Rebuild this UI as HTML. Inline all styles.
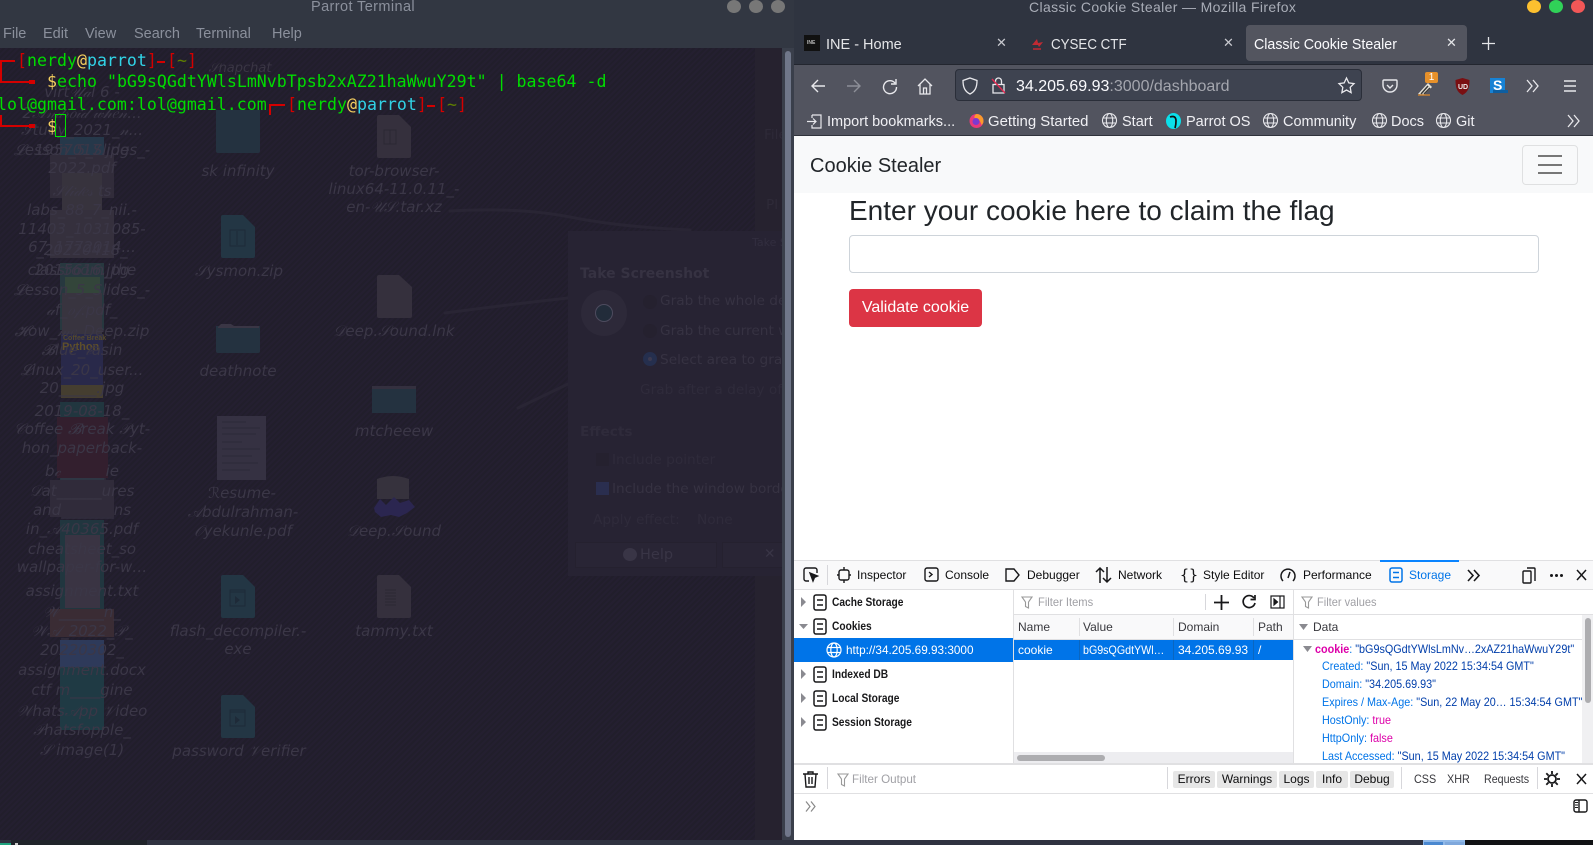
<!DOCTYPE html>
<html><head><meta charset="utf-8"><title>Parrot desktop</title>
<style>
html,body{margin:0;padding:0;width:1593px;height:845px;overflow:hidden;background:#231f2e}
*{box-sizing:border-box}
.a{position:absolute}
.t{position:absolute;white-space:nowrap;line-height:20px;height:20px;font-family:"Liberation Sans",sans-serif;transform-origin:left center}
.d{position:absolute;white-space:nowrap;line-height:20px;height:20px;font-family:"DejaVu Sans",sans-serif;font-style:italic;font-size:15px;color:#3b3747;transform:translateX(-50%)}
.g{position:absolute;white-space:nowrap;line-height:20px;height:20px;font-family:"DejaVu Sans",sans-serif;font-size:13.7px;color:#363242}
.m{position:absolute;white-space:pre;line-height:22px;height:22px;font-family:"DejaVu Sans Mono",monospace;font-size:16.6px;color:#00dc00}
.r{position:absolute;background:#d40000}
.mt{font-size:14.5px;color:#8b909c;top:24px}
.tb{font-size:14.5px;color:#fbfbfe;top:35px}
.bm{font-size:14.5px;color:#f0f0f4;top:112px}
.dt{font-size:12px;color:#0c0c0d;top:565px}
.side{font-size:12px;font-weight:bold;color:#18181a;transform:scaleX(.85)}
.h{font-size:12px;color:#38383d;top:617px}
.c{font-size:12px;color:#fff;top:640px}
.k{font-size:12px;color:#0074e8;transform:scaleX(.9)}
.k b{font-weight:normal;color:#003eaa}
.k i{font-style:normal;color:#dd00a9}
.btn{position:absolute;top:771px;height:17px;background:#e6e6e6;border-radius:2px;font:12px/17px "Liberation Sans",sans-serif;color:#0c0c0d;text-align:center}
svg{position:absolute;overflow:visible}
</style></head><body>

<!-- desktop background -->
<div class="a" style="left:0;top:48px;width:782px;height:792px;background:repeating-linear-gradient(135deg,#241f30 0,#241f30 2px,#211e2b 2px,#211e2b 4px)"></div>
<div class="a" style="left:755px;top:48px;width:27px;height:792px;background:#26222f"></div>

<!-- column 1 thumbs -->
<div class="a" style="left:60px;top:137px;width:44px;height:26px;background:#26384a"></div>
<div class="a" style="left:50px;top:155px;width:64px;height:43px;background:#312c3a"></div>
<div class="a" style="left:62px;top:173px;width:40px;height:65px;background:#37333d"></div>
<div class="a" style="left:50px;top:210px;width:64px;height:48px;background:#35303d"></div>
<div class="a" style="left:60px;top:263px;width:44px;height:67px;background:#27383f"></div>
<div class="a" style="left:65px;top:277px;width:35px;height:17px;background:#33453a"></div>
<div class="a" style="left:62px;top:293px;width:40px;height:41px;background:#38343f"></div>
<div class="a" style="left:61px;top:334px;width:42px;height:64px;background:#29294a"></div>
<div class="a" style="left:61px;top:385px;width:42px;height:13px;background:#453e30"></div>
<div class="a" style="left:60px;top:402px;width:44px;height:80px;background:#21363f"></div>
<div class="a" style="left:57px;top:417px;width:51px;height:61px;background:#331f2e"></div>
<div class="a" style="left:50px;top:480px;width:64px;height:37px;background:#302b3a"></div>
<div class="a" style="left:60px;top:520px;width:44px;height:93px;background:#21363f"></div>
<div class="a" style="left:65px;top:535px;width:35px;height:73px;background:#3a3443"></div>
<div class="a" style="left:50px;top:609px;width:64px;height:28px;background:#3a2c34"></div>
<div class="a" style="left:60px;top:640px;width:44px;height:27px;background:#2e3a5a"></div>
<div class="a" style="left:60px;top:667px;width:44px;height:63px;background:#1f3a44"></div>
<div class="t" style="left:63px;top:329px;font-size:7px;font-weight:bold;color:#554a2c">Coffee Break</div>
<div class="t" style="left:62px;top:337px;font-size:11px;font-weight:bold;color:#5f4f2a">Python</div>

<!-- column 1 overlapped text -->
<div class="d" style="left:82px;top:82px">virt𝒰𝒶l 6 -</div>
<div class="d" style="left:82px;top:103px">2𝒜𝓃𝒹𝓇𝑜𝒾𝒹 𝓌𝒽𝑒𝓃...</div>
<div class="d" style="left:82px;top:120px">𝒮tudy_2021_𝓃...</div>
<div class="d" style="left:82px;top:140px">𝓛esson_5_Slides_-</div>
<div class="d" style="left:82px;top:140px">1957017.jpg</div>
<div class="d" style="left:82px;top:158px">2022.pdf</div>
<div class="d" style="left:82px;top:181px">𝒮𝓁𝒾𝒹𝑒𝓈 ts</div>
<div class="d" style="left:82px;top:200px">labs_88_7_nii.-</div>
<div class="d" style="left:82px;top:219px">11403_1031085-</div>
<div class="d" style="left:82px;top:237px">67_1772014...</div>
<div class="d" style="left:82px;top:240px">_20220418_</div>
<div class="d" style="left:82px;top:260px">classroom_the</div>
<div class="d" style="left:82px;top:260px">2015616.jpg</div>
<div class="d" style="left:82px;top:280px">𝓛esson_5_Slides_-</div>
<div class="d" style="left:82px;top:300px">𝒶f_𝑜𝒻.pdf_</div>
<div class="d" style="left:82px;top:321px">𝓗ow_𝓂𝑒_Deep.zip</div>
<div class="d" style="left:82px;top:340px">𝓑lue_𝒷asin</div>
<div class="d" style="left:82px;top:360px">𝓛inux_20_user...</div>
<div class="d" style="left:82px;top:378px">20_____.jpg</div>
<div class="d" style="left:82px;top:401px">2019-08-18_</div>
<div class="d" style="left:82px;top:419px">𝒞offee 𝓑reak 𝒫yt-</div>
<div class="d" style="left:82px;top:438px">hon_paperback-</div>
<div class="d" style="left:82px;top:461px">b𝒸______ie</div>
<div class="d" style="left:82px;top:481px">𝒟at______ures</div>
<div class="d" style="left:82px;top:500px">and_______ns</div>
<div class="d" style="left:82px;top:519px">in_𝒜40365.pdf</div>
<div class="d" style="left:82px;top:539px">cheatsheet_so</div>
<div class="d" style="left:82px;top:557px">wallpaper-for-w…</div>
<div class="d" style="left:82px;top:581px">assignment.txt</div>
<div class="d" style="left:82px;top:602px">𝒲______n_</div>
<div class="d" style="left:82px;top:621px">𝒲𝒜_2022_𝒫_</div>
<div class="d" style="left:82px;top:640px">20220302_</div>
<div class="d" style="left:82px;top:660px">assignment.docx</div>
<div class="d" style="left:82px;top:680px">ctf m____gine</div>
<div class="d" style="left:82px;top:701px">𝒲hats𝒜pp 𝒱ideo</div>
<div class="d" style="left:82px;top:720px">𝒫hatsfopple_</div>
<div class="d" style="left:82px;top:740px">𝒮 image(1)</div>

<!-- column 2 -->
<svg style="left:0;top:0" width="1" height="1">
<g fill="#243240">
<path d="M216 110h44v41a2 2 0 0 1-2 2h-40a2 2 0 0 1-2-2z"/>
<path d="M216 326h44v25a2 2 0 0 1-2 2h-40a2 2 0 0 1-2-2z"/>
<path d="M372 389h44v24h-44z"/>
</g>
<path d="M218 327l3-3h10l3 2h25v2h-41z" fill="#3a3645"/>
<g fill="#233644">
<path d="M223 215h20l12 12v29a2 2 0 0 1-2 2h-30a2 2 0 0 1-2-2v-39a2 2 0 0 1 2-2z"/>
<path d="M223 575h20l12 12v29a2 2 0 0 1-2 2h-30a2 2 0 0 1-2-2v-39a2 2 0 0 1 2-2z"/>
<path d="M223 695h20l12 12v29a2 2 0 0 1-2 2h-30a2 2 0 0 1-2-2v-39a2 2 0 0 1 2-2z"/>
</g>
<g fill="none" stroke="#1e2a38"><path d="M230 230h15v16h-15zM237 231v14"/><path d="M230 590h15v16h-15zM230 592h15"/><path d="M230 710h15v16h-15zM230 712h15"/></g>
<path d="M235 596l5 4-5 4zM235 716l5 4-5 4z" fill="#1e2a38"/>
<rect x="217" y="416" width="49" height="64" fill="#353142"/>
<g stroke="#2c2938" stroke-width="1"><path d="M222 422h24M222 428h38M222 434h34M222 442h20M222 449h38M222 456h30M222 463h36M222 470h28"/></g>
<g fill="#35303d">
<path d="M379 115h20l12 12v29a2 2 0 0 1-2 2h-30a2 2 0 0 1-2-2v-39a2 2 0 0 1 2-2z"/>
<path d="M379 275h20l13 12v29a2 2 0 0 1-2 2h-31a2 2 0 0 1-2-2v-39a2 2 0 0 1 2-2z"/>
<path d="M379 575h20l12 12v29a2 2 0 0 1-2 2h-30a2 2 0 0 1-2-2v-39a2 2 0 0 1 2-2z"/>
</g>
<path d="M384 130h12v14h-12zM390 130v14" fill="none" stroke="#2a2733"/>
<g stroke="#2a2733"><path d="M385 590h11M385 593h11M385 596h11M385 599h11M385 602h11M385 605h11"/></g>
<path d="M377 479q16-6 32 0v20h-32z" fill="#36323d"/>
<path d="M374 508l6-9 6 6 8-8 6 6 9-3 6 7-8 6-8 4-8-2-10 2-6-5z" fill="#2b2650"/>
<path d="M372 386h44v3h-44z" fill="#34303f"/>
<g fill="none" stroke="#292534" stroke-width="3" stroke-linecap="round">
<path d="M450 211q70-4 120 6t120 13"/>
<path d="M445 313q60-8 123-15"/>
<path d="M518 408q25-12 50-24"/>
</g>
</svg>
<div class="d" style="left:238px;top:161px">sk infinity</div>
<div class="d" style="left:239px;top:261px">𝒮ysmon.zip</div>
<div class="d" style="left:238px;top:361px">deathnote</div>
<div class="d" style="left:242px;top:483px">ℛesume-</div>
<div class="d" style="left:243px;top:502px">𝒜bdulrahman-</div>
<div class="d" style="left:243px;top:521px">𝒪yekunle.pdf</div>
<div class="d" style="left:238px;top:621px">flash_decompiler.-</div>
<div class="d" style="left:238px;top:639px">exe</div>
<div class="d" style="left:239px;top:741px">password 𝒱erifier</div>
<!-- column 3 -->
<div class="d" style="left:394px;top:161px">tor-browser-</div>
<div class="d" style="left:394px;top:179px">linux64-11.0.11_-</div>
<div class="d" style="left:394px;top:197px">en-𝒰𝒮.tar.xz</div>
<div class="d" style="left:394px;top:321px">𝒟eep.𝒮ound.lnk</div>
<div class="d" style="left:394px;top:421px">mtcheeew</div>
<div class="d" style="left:394px;top:521px">𝒟eep.𝒮ound</div>
<div class="d" style="left:394px;top:621px">tammy.txt</div>
<div class="d" style="left:240px;top:59px;font-size:13px;color:#3a3644">𝒮napchat</div>

<!-- ghost window -->
<div class="g" style="left:755px;top:125px;width:27px;overflow:hidden;padding-left:9px;color:#2e2a38">File</div>
<div class="g" style="left:755px;top:195px;width:27px;overflow:hidden;padding-left:11px;color:#2e2a38">Pl</div>
<div class="a" style="left:568px;top:231px;width:214px;height:345px;background:#272333;overflow:hidden">
<div class="g" style="left:184px;top:2px;font-size:11px;color:#322e3f">Take S</div>
<div class="g" style="left:12px;top:33px;font-weight:bold;font-size:14px;color:#363242">Take Screenshot</div>
<div class="a" style="left:13px;top:59px;width:46px;height:46px;border-radius:50%;background:#2d2939"></div>
<div class="a" style="left:27px;top:73px;width:18px;height:18px;border-radius:50%;border:1px solid #4d4b5e;background:#222c3a"></div>
<div class="a" style="left:75px;top:64px;width:14px;height:14px;border-radius:50%;background:#25212f"></div>
<div class="a" style="left:75px;top:93px;width:14px;height:14px;border-radius:50%;background:#25212f"></div>
<div class="a" style="left:75px;top:121px;width:14px;height:14px;border-radius:50%;background:#252f4e"></div>
<div class="a" style="left:80px;top:126px;width:4px;height:4px;border-radius:50%;background:#3c3a50"></div>
<div class="g" style="left:92px;top:60px">Grab the whole desktop</div>
<div class="g" style="left:92px;top:90px">Grab the current window</div>
<div class="g" style="left:92px;top:119px">Select area to grab</div>
<div class="g" style="left:72px;top:149px;color:#2f2b3b">Grab after a delay of</div>
<div class="g" style="left:12px;top:191px;font-weight:bold;color:#2f2b3b">Effects</div>
<div class="a" style="left:28px;top:222px;width:13px;height:13px;background:#25212f"></div>
<div class="a" style="left:28px;top:251px;width:13px;height:13px;background:#2a2e4f"></div>
<div class="g" style="left:44px;top:219px;color:#2f2b3b">Include pointer</div>
<div class="g" style="left:44px;top:248px">Include the window border</div>
<div class="g" style="left:25px;top:279px;color:#2f2b3b">Apply effect:</div>
<div class="g" style="left:129px;top:279px;color:#2f2b3b">None</div>
<div class="a" style="left:7px;top:311px;width:142px;height:26px;background:#292535;border:1px solid #25212f"></div>
<div class="a" style="left:154px;top:311px;width:60px;height:26px;background:#292535;border:1px solid #25212f;border-right:0"></div>
<div class="a" style="left:55px;top:317px;width:14px;height:13px;border-radius:50%;background:#393546"></div>
<div class="g" style="left:72px;top:314px;font-size:14.5px;color:#393546">Help</div>
<div class="g" style="left:196px;top:313px;color:#393546">✕</div>
</div>

<!-- terminal top -->
<div class="a" style="left:0;top:0;width:794px;height:48px;background:#323742"></div>
<div class="t" style="left:311px;top:-3px;font-size:14.5px;color:#8b909c;letter-spacing:.4px">Parrot Terminal</div>
<div class="a" style="left:727px;top:0;width:14px;height:13px;border-radius:50%;background:#777"></div>
<div class="a" style="left:749px;top:0;width:14px;height:13px;border-radius:50%;background:#777"></div>
<div class="a" style="left:771px;top:0;width:14px;height:13px;border-radius:50%;background:#777"></div>
<div class="t mt" style="left:3px">File</div>
<div class="t mt" style="left:43px">Edit</div>
<div class="t mt" style="left:85px">View</div>
<div class="t mt" style="left:134px">Search</div>
<div class="t mt" style="left:196px">Terminal</div>
<div class="t mt" style="left:272px">Help</div>

<!-- terminal text -->
<div class="r" style="left:0;top:60px;width:15px;height:2px"></div>
<div class="r" style="left:0;top:60px;width:2px;height:23px"></div>
<div class="r" style="left:0;top:81px;width:30px;height:2px"></div>
<div class="r" style="left:29px;top:80px;width:6px;height:4px"></div>
<div class="m" style="left:17px;top:50px"><span style="color:#d40000">[</span>nerdy<span style="color:#f5cf5f">@</span><span style="color:#31d3e6">parrot</span><span style="color:#d40000">]</span></div>
<div class="r" style="left:157px;top:61px;width:8px;height:2px"></div>
<div class="m" style="left:167px;top:50px;color:#d40000">[<span style="color:#5f7f00">~</span>]</div>
<div class="m" style="left:47px;top:71px"><span style="color:#f5cf5f">$</span>echo "bG9sQGdtYWlsLmNvbTpsb2xAZ21haWwuY29t" | base64 -d</div>
<div class="m" style="left:-3px;top:94px">lol@gmail.com:lol@gmail.com</div>
<div class="r" style="left:269px;top:104px;width:16px;height:2px"></div>
<div class="r" style="left:269px;top:104px;width:2px;height:11px"></div>
<div class="m" style="left:287px;top:94px"><span style="color:#d40000">[</span>nerdy<span style="color:#f5cf5f">@</span><span style="color:#31d3e6">parrot</span><span style="color:#d40000">]</span></div>
<div class="r" style="left:427px;top:105px;width:8px;height:2px"></div>
<div class="m" style="left:437px;top:94px;color:#d40000">[<span style="color:#5f7f00">~</span>]</div>
<div class="r" style="left:0;top:115px;width:2px;height:12px"></div>
<div class="r" style="left:0;top:125px;width:30px;height:2px"></div>
<div class="r" style="left:29px;top:124px;width:6px;height:4px"></div>
<div class="m" style="left:47px;top:116px;color:#f5cf5f">$</div>
<div class="a" style="left:55px;top:114px;width:11px;height:23px;border:1px solid #00e000"></div>

<!-- terminal scrollbar -->
<div class="a" style="left:782px;top:48px;width:12px;height:792px;background:#3a3f4b"></div>
<div class="a" style="left:785px;top:51px;width:6px;height:786px;border-radius:3px;background:#70778a"></div>

<!-- Firefox chrome -->
<div class="a" style="left:794px;top:0;width:799px;height:64px;background:#2f3440"></div>
<div class="t" style="left:1029px;top:-3px;font-size:14px;color:#a9adb7;letter-spacing:.36px">Classic Cookie Stealer — Mozilla Firefox</div>
<div class="a" style="left:1527px;top:0;width:14px;height:13px;border-radius:50%;background:#fdc02f"></div>
<div class="a" style="left:1549px;top:0;width:14px;height:13px;border-radius:50%;background:#30d158"></div>
<div class="a" style="left:1571px;top:0;width:14px;height:13px;border-radius:50%;background:#f25757"></div>

<!-- tabs -->
<div class="a" style="left:804px;top:35px;width:16px;height:16px;background:#111"></div>
<div class="t" style="left:807px;top:33px;font-size:5px;font-weight:bold;color:#bbb">INE</div>
<div class="t tb" style="left:826px;color:#e4e5e8">INE - Home</div>
<div class="t" style="left:996px;top:33px;font-size:13px;color:#c8c9cf">✕</div>
<svg style="left:1031px;top:36px" width="14" height="16"><path d="M1 9l5-6 1 4 5-1-4 5-1-2z" fill="#c22a33"/><path d="M2 13h8" stroke="#c22a33" stroke-width="1.5"/></svg>
<div class="t tb" style="left:1051px;color:#e4e5e8;transform:scaleX(.92)">CYSEC CTF</div>
<div class="t" style="left:1223px;top:33px;font-size:13px;color:#c8c9cf">✕</div>
<div class="a" style="left:1246px;top:25px;width:221px;height:36px;background:#53555f;border-radius:4px"></div>
<div class="t tb" style="left:1254px;transform:scaleX(.98)">Classic Cookie Stealer</div>
<div class="t" style="left:1446px;top:33px;font-size:13px;color:#e4e5e8">✕</div>
<svg style="left:1482px;top:37px" width="13" height="13"><path d="M6.5 0v13M0 6.5h13" stroke="#e4e5e8" stroke-width="1.3"/></svg>

<!-- nav -->
<div class="a" style="left:794px;top:64px;width:799px;height:72px;background:#52545f;border-top:1px solid #23262f;border-bottom:1px solid #2f323b"></div>
<svg style="left:810px;top:78px" width="16" height="16" fill="none" stroke="#e8e8ec" stroke-width="1.4"><path d="M15 8H2M8 2L2 8l6 6"/></svg>
<svg style="left:846px;top:78px" width="16" height="16" fill="none" stroke="#8d8f98" stroke-width="1.4"><path d="M1 8h13M8 2l6 6-6 6"/></svg>
<svg style="left:882px;top:78px" width="16" height="16" fill="none" stroke="#e8e8ec" stroke-width="1.4"><path d="M13 5A6.500 6.500 0 1 0 14.500 9M14 1v5H9"/></svg>
<svg style="left:917px;top:78px" width="16" height="17" fill="none" stroke="#e8e8ec" stroke-width="1.3"><path d="M1 8l7-7 7 7M3 6v10h10V6M6.500 16v-6h3v6"/></svg>
<div class="a" style="left:955px;top:69px;width:407px;height:32px;background:#3e4350;border:1px solid #2a2e39;border-radius:4px"></div>
<svg style="left:962px;top:77px" width="16" height="18" fill="none" stroke="#e8e8ec" stroke-width="1.3"><path d="M8 1l7 2.500c0 7-2 11-7 13.500C3 14.500 1 10.500 1 3.500z"/></svg>
<svg style="left:991px;top:77px" width="15" height="17" fill="none"><path d="M2 7.500h11V16H2zM4.500 7.500V4a3 3 0 0 1 6 0v3.500" stroke="#e8e8ec" stroke-width="1.3"/><path d="M1 2l13 14" stroke="#e22850" stroke-width="1.4"/></svg>
<div class="t" style="left:1016px;top:77px;font-size:16px;color:#fbfbfe">34.205.69.93<span style="color:#a4a6ae">:3000/dashboard</span></div>
<svg style="left:1338px;top:77px" width="17" height="17" fill="none" stroke="#e8e8ec" stroke-width="1.3"><path d="M8.500 1l2.300 4.900 5.200.7-3.800 3.700.9 5.300-4.600-2.600-4.600 2.600.9-5.300L1 6.600l5.200-.7z"/></svg>
<svg style="left:1382px;top:78px" width="16" height="16" fill="none" stroke="#e8e8ec" stroke-width="1.4"><path d="M2 2h12a1 1 0 0 1 1 1v4a7 7 0 0 1-14 0V3a1 1 0 0 1 1-1zM5 7l3 3 3-3"/></svg>
<svg style="left:1417px;top:80px" width="16" height="16"><path d="M1 14L11 3l4 4-8 8z" fill="#e5e2d8"/><path d="M4 14l7-8M7 14l6-6" stroke="#3a3a3a" stroke-width="1.5"/><path d="M1 15h12" stroke="#c78030" stroke-width="1.500"/></svg>
<div class="a" style="left:1425px;top:72px;width:13px;height:11px;background:#e7912a;border-radius:2px;font:10px/11px 'Liberation Sans',sans-serif;color:#fff;text-align:center">1</div>
<svg style="left:1455px;top:78px" width="15" height="17"><path d="M7.500 0l7 2c0 7-1 12-7 15C1.500 14 .5 9 .5 2z" fill="#7a0f12"/><text x="3" y="11" font-size="7" font-weight="bold" fill="#eee" font-family="Liberation Sans, sans-serif">UD</text></svg>
<div class="a" style="left:1490px;top:78px;width:15px;height:15px;background:#1782d4"></div>
<div class="a" style="left:1493px;top:90px;width:15px;height:3px;background:#0d5ea0"></div>
<div class="t" style="left:1493px;top:75px;font-size:14px;font-weight:bold;color:#fff">S</div>
<svg style="left:1526px;top:79px" width="14" height="14" fill="none" stroke="#e8e8ec" stroke-width="1.3"><path d="M1 1l5 6-5 6M7 1l5 6-5 6"/></svg>
<svg style="left:1563px;top:80px" width="14" height="12" stroke="#e8e8ec" stroke-width="1.4"><path d="M1 1h12M1 6h12M1 11h12"/></svg>

<!-- bookmarks -->
<svg style="left:807px;top:114px" width="15" height="15" fill="none" stroke="#e8e8ec" stroke-width="1.2"><path d="M5 1h9v13H5v-3M5 4V1M0 7.500h9M6 4.500l3 3-3 3"/></svg>
<div class="t bm" style="left:827px">Import bookmarks...</div>
<svg style="left:969px;top:113px" width="15" height="15"><circle cx="7.500" cy="8" r="7" fill="#e8397a"/><path d="M7.500 1a7 7 0 0 1 7 7c0 2-1 3-2 4-1-4-3-6-5-6S4 3 7.500 1z" fill="#fb9a2c"/><circle cx="7" cy="8.500" r="3.500" fill="#7b3ad0"/></svg>
<div class="t bm" style="left:988px;transform:scaleX(1.03)">Getting Started</div>
<svg style="left:1102px;top:113px" width="15" height="15" fill="none" stroke="#e8e8ec" stroke-width="1.100"><circle cx="7.500" cy="7.500" r="7"/><ellipse cx="7.500" cy="7.500" rx="3.200" ry="7"/><path d="M1 5h13M1 10h13"/></svg>
<div class="t bm" style="left:1122px">Start</div>
<div class="a" style="left:1166px;top:113px;width:15px;height:16px;border-radius:50%;background:#0be0ea"></div>
<svg style="left:1166px;top:113px" width="15" height="16" fill="none" stroke="#111" stroke-width="1.700"><path d="M4 4q6-2 6 4 0 4-1 7"/></svg>
<div class="t bm" style="left:1186px">Parrot OS</div>
<svg style="left:1263px;top:113px" width="15" height="15" fill="none" stroke="#e8e8ec" stroke-width="1.100"><circle cx="7.500" cy="7.500" r="7"/><ellipse cx="7.500" cy="7.500" rx="3.200" ry="7"/><path d="M1 5h13M1 10h13"/></svg>
<div class="t bm" style="left:1283px">Community</div>
<svg style="left:1372px;top:113px" width="15" height="15" fill="none" stroke="#e8e8ec" stroke-width="1.100"><circle cx="7.500" cy="7.500" r="7"/><ellipse cx="7.500" cy="7.500" rx="3.200" ry="7"/><path d="M1 5h13M1 10h13"/></svg>
<div class="t bm" style="left:1391px">Docs</div>
<svg style="left:1436px;top:113px" width="15" height="15" fill="none" stroke="#e8e8ec" stroke-width="1.100"><circle cx="7.500" cy="7.500" r="7"/><ellipse cx="7.500" cy="7.500" rx="3.200" ry="7"/><path d="M1 5h13M1 10h13"/></svg>
<div class="t bm" style="left:1456px">Git</div>
<svg style="left:1567px;top:114px" width="14" height="14" fill="none" stroke="#e8e8ec" stroke-width="1.300"><path d="M1 1l5 6-5 6M7 1l5 6-5 6"/></svg>

<!-- page -->
<div class="a" style="left:794px;top:136px;width:799px;height:704px;background:#fff"></div>
<div class="a" style="left:794px;top:136px;width:799px;height:57px;background:#f8f9fa"></div>
<div class="t" style="left:810px;top:156px;font-size:20px;color:#212529">Cookie Stealer</div>
<div class="a" style="left:1522px;top:145px;width:56px;height:40px;border:1px solid #dfe0e1;border-radius:4px"></div>
<div class="a" style="left:1538px;top:155px;width:24px;height:2px;background:#777"></div>
<div class="a" style="left:1538px;top:164px;width:24px;height:2px;background:#777"></div>
<div class="a" style="left:1538px;top:172px;width:24px;height:2px;background:#777"></div>
<div class="t" style="left:849px;top:200px;font-size:28px;line-height:22px;height:22px;color:#212529">Enter your cookie here to claim the flag</div>
<div class="a" style="left:849px;top:235px;width:690px;height:38px;border:1px solid #ced4da;border-radius:4px;background:#fff"></div>
<div class="a" style="left:849px;top:289px;width:133px;height:38px;background:#dc3545;border-radius:4px;color:#fff;font:16px/38px 'Liberation Sans',sans-serif;text-align:center">Validate cookie</div>

<!-- devtools -->
<div class="a" style="left:794px;top:560px;width:799px;height:30px;background:#f9f9fa;border-top:1px solid #e0e0e2;border-bottom:1px solid #e0e0e2"></div>
<div class="a" style="left:1380px;top:560px;width:79px;height:2px;background:#0a84ff"></div>
<svg style="left:803px;top:567px" width="16" height="16" fill="none" stroke="#18181a" stroke-width="1.400"><path d="M6 14H3a2 2 0 0 1-2-2V3a2 2 0 0 1 2-2h9a2 2 0 0 1 2 2v3"/><path d="M7 6l7.500 3-3 1.300L10 14z" fill="#18181a"/></svg>
<div class="a" style="left:827px;top:565px;width:1px;height:20px;background:#d7d7db"></div>
<svg style="left:837px;top:567px" width="14" height="16" fill="none" stroke="#18181a" stroke-width="1.400"><rect x="2" y="3" width="10" height="10" rx="2"/><path d="M7 0v3M7 13v3M0 8h2M12 8h2"/></svg>
<div class="t dt" style="left:857px">Inspector</div>
<svg style="left:924px;top:567px" width="15" height="15" fill="none" stroke="#18181a" stroke-width="1.400"><rect x="1" y="1" width="13" height="13" rx="2"/><path d="M5 5l3 2.500L5 10"/></svg>
<div class="t dt" style="left:945px">Console</div>
<svg style="left:1005px;top:568px" width="15" height="14" fill="none" stroke="#18181a" stroke-width="1.400"><path d="M1 1h8l5 6-5 6H1z"/></svg>
<div class="t dt" style="left:1027px">Debugger</div>
<svg style="left:1095px;top:566px" width="17" height="18" fill="none" stroke="#18181a" stroke-width="1.500"><path d="M5 17V2M1 6l4-4 4 4M12 1v15M8 12l4 4 4-4"/></svg>
<div class="t dt" style="left:1118px">Network</div>
<div class="t" style="left:1180px;top:565px;font-size:15px;color:#18181a;font-family:'DejaVu Sans Mono',monospace">{}</div>
<div class="t dt" style="left:1203px">Style Editor</div>
<svg style="left:1280px;top:567px" width="16" height="16" fill="none" stroke="#18181a" stroke-width="1.500"><path d="M3 14A7 7 0 1 1 13 14M10 5L8 11"/></svg>
<div class="t dt" style="left:1303px">Performance</div>
<svg style="left:1389px;top:567px" width="14" height="16" fill="none" stroke="#0074e8" stroke-width="1.500"><rect x="1" y="1" width="12" height="14" rx="2"/><path d="M4 5.500h6M4 10.500h6"/></svg>
<div class="t dt" style="left:1409px;color:#0074e8">Storage</div>
<svg style="left:1467px;top:569px" width="14" height="13" fill="none" stroke="#18181a" stroke-width="1.600"><path d="M1 1l5 5.500-5 5.500M7 1l5 5.500-5 5.500"/></svg>
<svg style="left:1522px;top:567px" width="14" height="17" fill="none" stroke="#18181a" stroke-width="1.400"><rect x="1" y="4" width="8" height="12" rx="1"/><path d="M5 1h7a1 1 0 0 1 1 1v12"/></svg>
<div class="a" style="left:1550px;top:574px;width:3px;height:3px;border-radius:50%;background:#18181a;box-shadow:5px 0 #18181a,10px 0 #18181a"></div>
<svg style="left:1576px;top:569px" width="11" height="12" stroke="#18181a" stroke-width="1.500"><path d="M1 1l9 10M10 1L1 11"/></svg>

<!-- storage tree -->
<div class="a" style="left:794px;top:638px;width:219px;height:24px;background:#0074e8"></div>
<div class="a" style="left:1013px;top:590px;width:1px;height:173px;background:#e0e0e2"></div>
<div class="a" style="left:1293px;top:590px;width:1px;height:173px;background:#e0e0e2"></div>
<svg style="left:0;top:0" width="1" height="1">
<g fill="#8a8a90"><path d="M801 597l5 5-5 5zM801 669l5 5-5 5zM801 693l5 5-5 5zM801 717l5 5-5 5z"/><path d="M799 624h9l-4.500 5z"/></g>
<g fill="none" stroke="#18181a" stroke-width="1.500">
<rect x="814" y="595" width="12" height="15" rx="2"/><path d="M817 600h6M817 605h6"/>
<rect x="814" y="619" width="12" height="15" rx="2"/><path d="M817 624h6M817 629h6"/>
<rect x="814" y="667" width="12" height="15" rx="2"/><path d="M817 672h6M817 677h6"/>
<rect x="814" y="691" width="12" height="15" rx="2"/><path d="M817 696h6M817 701h6"/>
<rect x="814" y="715" width="12" height="15" rx="2"/><path d="M817 720h6M817 725h6"/>
</g>
<g fill="none" stroke="#fff" stroke-width="1.200"><circle cx="834" cy="650" r="7"/><ellipse cx="834" cy="650" rx="3.200" ry="7"/><path d="M827.500 647.500h13M827.500 652.500h13"/></g>
</svg>
<div class="t side" style="left:832px;top:592px">Cache Storage</div>
<div class="t side" style="left:832px;top:616px">Cookies</div>
<div class="t" style="left:846px;top:640px;font-size:12px;color:#fff;transform:scaleX(.98)">http://34.205.69.93:3000</div>
<div class="t side" style="left:832px;top:664px">Indexed DB</div>
<div class="t side" style="left:832px;top:688px">Local Storage</div>
<div class="t side" style="left:832px;top:712px">Session Storage</div>

<!-- table -->
<div class="a" style="left:1014px;top:614px;width:579px;height:1px;background:#e0e0e2"></div>
<div class="a" style="left:1014px;top:615px;width:279px;height:24px;background:#f9f9fa"></div>
<svg style="left:1022px;top:596px" width="11" height="13" fill="none" stroke="#999" stroke-width="1.100"><path d="M0 1h10L6.500 6v6l-3-1.500V6z"/></svg>
<div class="t" style="left:1038px;top:592px;font-size:12px;color:#a0a0a5;transform:scaleX(.93)">Filter Items</div>
<div class="a" style="left:1205px;top:594px;width:1px;height:16px;background:#d7d7db"></div>
<svg style="left:1214px;top:595px" width="15" height="15" stroke="#18181a" stroke-width="1.800"><path d="M7.500 0v15M0 7.500h15"/></svg>
<svg style="left:1241px;top:594px" width="15" height="16" fill="none" stroke="#18181a" stroke-width="1.700"><path d="M13 4A6 6 0 1 0 14 9M14 1v4.500H9.500"/></svg>
<svg style="left:1270px;top:595px" width="15" height="14" fill="none" stroke="#18181a" stroke-width="1.200"><rect x="1" y="1" width="13" height="12"/><path d="M10 1v12"/><path d="M4 4l3.500 3L4 10z" fill="#18181a"/></svg>
<svg style="left:1302px;top:596px" width="11" height="13" fill="none" stroke="#999" stroke-width="1.100"><path d="M0 1h10L6.500 6v6l-3-1.500V6z"/></svg>
<div class="t" style="left:1317px;top:592px;font-size:12px;color:#a0a0a5;transform:scaleX(.92)">Filter values</div>
<div class="t h" style="left:1018px">Name</div>
<div class="t h" style="left:1083px">Value</div>
<div class="t h" style="left:1178px">Domain</div>
<div class="t h" style="left:1258px">Path</div>
<div class="a" style="left:1079px;top:618px;width:1px;height:18px;background:#e0e0e2"></div>
<div class="a" style="left:1173px;top:618px;width:1px;height:18px;background:#e0e0e2"></div>
<div class="a" style="left:1253px;top:618px;width:1px;height:18px;background:#e0e0e2"></div>
<div class="a" style="left:1014px;top:639px;width:579px;height:1px;background:#e0e0e2"></div>
<div class="a" style="left:1014px;top:640px;width:279px;height:20px;background:#0074e8"></div>
<div class="a" style="left:1079px;top:640px;width:1px;height:20px;background:#0a66c0"></div>
<div class="a" style="left:1173px;top:640px;width:1px;height:20px;background:#0a66c0"></div>
<div class="a" style="left:1253px;top:640px;width:1px;height:20px;background:#0a66c0"></div>
<div class="t c" style="left:1018px">cookie</div>
<div class="t c" style="left:1083px;transform:scaleX(.89)">bG9sQGdtYWl…</div>
<div class="t c" style="left:1178px">34.205.69.93</div>
<div class="t c" style="left:1258px">/</div>
<div class="a" style="left:1014px;top:752px;width:279px;height:11px;background:#ededf0"></div>
<div class="a" style="left:1017px;top:755px;width:88px;height:6px;border-radius:3px;background:#adadb0"></div>

<!-- sidebar data -->
<svg style="left:0;top:0" width="1" height="1"><path d="M1299 624h9l-4.500 6z" fill="#8a8a90"/><path d="M1303 646h9l-4.500 6z" fill="#8a8a90"/></svg>
<div class="t h" style="left:1313px">Data</div>
<div class="a" style="left:1294px;top:640px;width:288px;height:123px;overflow:hidden">
<div class="t k" style="left:21px;top:-1px"><i style="font-weight:bold">cookie</i>: <b>"bG9sQGdtYWlsLmNv…2xAZ21haWwuY29t"</b></div>
<div class="t k" style="left:28px;top:16px">Created: <b>"Sun, 15 May 2022 15:34:54 GMT"</b></div>
<div class="t k" style="left:28px;top:34px">Domain: <b>"34.205.69.93"</b></div>
<div class="t k" style="left:28px;top:52px">Expires / Max-Age: <b>"Sun, 22 May 20… 15:34:54 GMT"</b></div>
<div class="t k" style="left:28px;top:70px">HostOnly: <i>true</i></div>
<div class="t k" style="left:28px;top:88px">HttpOnly: <i>false</i></div>
<div class="t k" style="left:28px;top:106px">Last Accessed: <b>"Sun, 15 May 2022 15:34:54 GMT"</b></div>
</div>
<div class="a" style="left:1582px;top:615px;width:11px;height:148px;background:#f0f0f2"></div>
<div class="a" style="left:1585px;top:618px;width:6px;height:85px;border-radius:3px;background:#adadb0"></div>

<!-- console -->
<div class="a" style="left:794px;top:763px;width:799px;height:2px;background:#e0e0e2"></div>
<div class="a" style="left:794px;top:793px;width:799px;height:1px;background:#e0e0e2"></div>
<svg style="left:803px;top:771px" width="15" height="17" fill="none" stroke="#18181a" stroke-width="1.400"><path d="M0 3h15M5 3V1h5v2M2 3l1 13h9l1-13M6 6v7M9 6v7"/></svg>
<div class="a" style="left:827px;top:767px;width:1px;height:22px;background:#d7d7db"></div>
<svg style="left:838px;top:773px" width="11" height="14" fill="none" stroke="#999" stroke-width="1.100"><path d="M0 1h10L6.500 6v7l-3-1.500V6z"/></svg>
<div class="t" style="left:852px;top:769px;font-size:12px;color:#a0a0a5;transform:scaleX(.97)">Filter Output</div>
<div class="a" style="left:1167px;top:767px;width:1px;height:22px;background:#d7d7db"></div>
<div class="btn" style="left:1173px;width:42px">Errors</div>
<div class="btn" style="left:1217px;width:60px">Warnings</div>
<div class="btn" style="left:1279px;width:35px">Logs</div>
<div class="btn" style="left:1316px;width:32px">Info</div>
<div class="btn" style="left:1350px;width:44px">Debug</div>
<div class="a" style="left:1401px;top:767px;width:1px;height:22px;background:#d7d7db"></div>
<div class="t" style="left:1414px;top:769px;font-size:12px;color:#38383d;transform:scaleX(.9)">CSS</div>
<div class="t" style="left:1447px;top:769px;font-size:12px;color:#38383d;transform:scaleX(.9)">XHR</div>
<div class="t" style="left:1484px;top:769px;font-size:12px;color:#38383d;transform:scaleX(.89)">Requests</div>
<div class="a" style="left:1537px;top:767px;width:1px;height:22px;background:#d7d7db"></div>
<svg style="left:1544px;top:771px" width="16" height="16" fill="none" stroke="#18181a" stroke-width="1.800"><circle cx="8" cy="8" r="4"/><path d="M8 0v3M8 13v3M0 8h3M13 8h3M2.300 2.300l2.200 2.200M11.500 11.500l2.200 2.200M13.700 2.300l-2.200 2.200M4.500 11.500l-2.200 2.200"/></svg>
<svg style="left:1576px;top:773px" width="11" height="12" stroke="#18181a" stroke-width="1.500"><path d="M1 1l9 10M10 1L1 11"/></svg>
<svg style="left:805px;top:801px" width="12" height="11" fill="none" stroke="#888" stroke-width="1.200"><path d="M1 .5l4 5-4 5M6 .5l4 5-4 5"/></svg>
<svg style="left:1573px;top:799px" width="15" height="14" fill="none" stroke="#18181a" stroke-width="1.400"><rect x="1" y="1" width="13" height="12" rx="2"/><path d="M6 1v12"/><path d="M2 3.500h3M2 6h3M2 8.500h3" stroke-width="1"/></svg>

<!-- bottom panel -->
<div class="a" style="left:0;top:840px;width:1593px;height:5px;background:#2f3240"></div>
<div class="a" style="left:0;top:843px;width:11px;height:2px;background:#1fa37e"></div>
<div class="a" style="left:11px;top:840px;width:136px;height:5px;background:#20242a"></div>
<div class="a" style="left:15px;top:843px;width:3px;height:2px;background:#ccc"></div>
<div class="a" style="left:1423px;top:840px;width:42px;height:5px;background:#8fb8e8"></div>
<div class="a" style="left:1424px;top:842px;width:19px;height:3px;background:#4a88d0"></div>
<div class="a" style="left:1445px;top:842px;width:19px;height:3px;background:#7fa8dc"></div>
<div class="a" style="left:1465px;top:840px;width:128px;height:5px;background:#111214"></div>

</body></html>
